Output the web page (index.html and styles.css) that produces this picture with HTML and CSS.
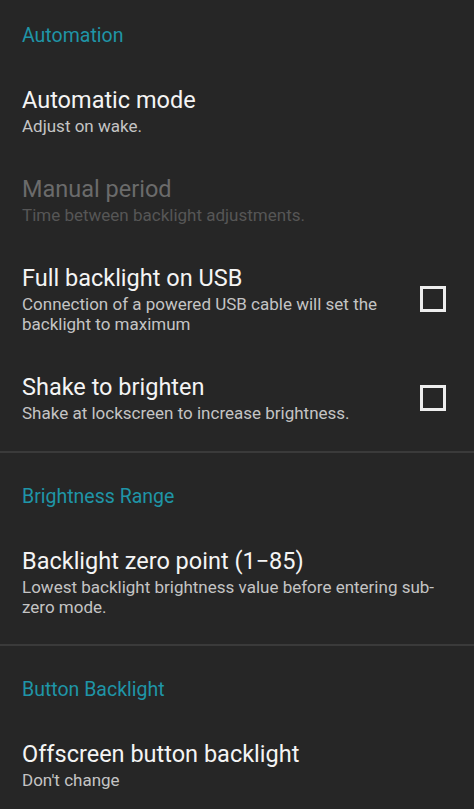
FILE: index.html
```html
<!DOCTYPE html>
<html lang="en">
<head>
    <meta charset="UTF-8">
    <meta name="viewport" content="width=device-width, initial-scale=1.0">
    <title>Settings</title>
    <link rel="stylesheet" href="styles.css">
</head>
<body>
<div class="screen">
    <div class="section first">
        <div class="cat">Automation</div>
        <div class="pref">
            <div class="text">
                <div class="title">Automatic mode</div>
                <div class="summary">Adjust on wake.</div>
            </div>
        </div>
        <div class="pref disabled">
            <div class="text">
                <div class="title">Manual period</div>
                <div class="summary">Time between backlight adjustments.</div>
            </div>
        </div>
        <div class="pref">
            <div class="text">
                <div class="title">Full backlight on USB</div>
                <div class="summary">Connection of a powered USB cable will set the backlight to maximum</div>
            </div>
            <div class="check"></div>
        </div>
        <div class="pref">
            <div class="text">
                <div class="title">Shake to brighten</div>
                <div class="summary">Shake at lockscreen to increase brightness.</div>
            </div>
            <div class="check"></div>
        </div>
    </div>
    <div class="section">
        <div class="cat">Brightness Range</div>
        <div class="pref">
            <div class="text">
                <div class="title">Backlight zero point (1&minus;85)</div>
                <div class="summary">Lowest backlight brightness value before entering sub-zero mode.</div>
            </div>
        </div>
    </div>
    <div class="section last">
        <div class="cat">Button Backlight</div>
        <div class="pref">
            <div class="text">
                <div class="title">Offscreen button backlight</div>
                <div class="summary">Don't change</div>
            </div>
        </div>
    </div>
</div>
</body>
</html>
```

FILE: styles.css
```css
*{
    margin: 0;
    padding: 0;
    box-sizing: border-box;
}
html, body{
    background: #262626;
}
body{
    font-family: Roboto, "Noto Sans", sans-serif;
    width: 474px;
    height: 809px;
    overflow: hidden;
}
.screen{
    display: flex;
    flex-direction: column;
}
.section{
    padding-bottom: 8px;
    border-bottom: 2px solid #3a3a3a;
}
.section.first{
    padding-bottom: 9px;
}
.section.last{
    border-bottom: none;
}
.cat{
    color: #1f95a7;
    font-size: 19.5px;
    line-height: 24px;
    padding: 32px 22px 18px 22px;
}
.section.first .cat{
    padding-top: 24px;
    padding-bottom: 18px;
}
.pref{
    display: flex;
    align-items: center;
    padding: 19.5px 28px 19.5px 22px;
    gap: 16px;
}
.pref .text{
    flex: 1;
}
.title{
    color: #f4f4f4;
    font-size: 23.5px;
    line-height: 28px;
}
.summary{
    color: #c4c4c4;
    font-size: 17px;
    line-height: 20px;
    margin-top: 2px;
}
.pref.disabled .title{
    color: #6b6b6b;
}
.pref.disabled .summary{
    color: #565656;
}
.check{
    width: 26px;
    height: 26px;
    border: 3px solid #ededed;
    flex-shrink: 0;
}
```
